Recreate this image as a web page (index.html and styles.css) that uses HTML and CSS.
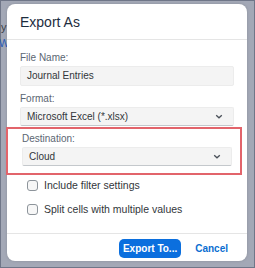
FILE: index.html
```html
<!DOCTYPE html>
<html lang="en">
  <head>
    <meta charset="UTF-8" />
    <meta name="viewport" content="width=device-width, initial-scale=1.0" />
    <title>Export As</title>
    <link rel="stylesheet" href="styles.css">
  </head>
  <body>
    <div class="backdrop">
      <div class="bg-line">y</div>
      <div class="bg-line bg-link">W</div>
    </div>

    <div class="dialog">
      <div class="dialog-header">Export As</div>
      <div class="dialog-content">
        <div class="field">
          <label class="field-label">File Name:</label>
          <div class="input">Journal Entries</div>
        </div>
        <div class="field">
          <label class="field-label">Format:</label>
          <div class="input select">
            <span>Microsoft Excel (*.xlsx)</span>
            <svg class="chevron" width="8" height="5" viewBox="0 0 8 5">
              <path d="M1.2 1.2l2.8 2.6 2.8-2.6" fill="none" stroke="#4a5059" stroke-width="1.3" />
            </svg>
          </div>
        </div>
        <div class="field highlight">
          <label class="field-label">Destination:</label>
          <div class="input select">
            <span>Cloud</span>
            <svg class="chevron" width="8" height="5" viewBox="0 0 8 5">
              <path d="M1.2 1.2l2.8 2.6 2.8-2.6" fill="none" stroke="#4a5059" stroke-width="1.3" />
            </svg>
          </div>
        </div>
        <div class="checks">
          <label class="check-row"><span class="checkbox"></span>Include filter settings</label>
          <label class="check-row"><span class="checkbox"></span>Split cells with multiple values</label>
        </div>
      </div>
      <div class="dialog-footer">
        <button class="btn btn-primary">Export To...</button>
        <button class="btn btn-ghost">Cancel</button>
      </div>
    </div>
  </body>
</html>
```

FILE: styles.css
```css
/* General reset */
* {
  margin: 0;
  padding: 0;
  box-sizing: border-box;
  font-family: "Liberation Sans", Arial, sans-serif;
}

body {
  position: relative;
  width: 255px;
  height: 268px;
  overflow: hidden;
  background: #a3a8b6;
  box-shadow: inset 0 0 0 1px #6f7688;
}

/* Page behind the dialog */
.backdrop {
  padding-top: 19px;
  font-size: 11px;
  line-height: 16px;
  color: #3a3f48;
}

.bg-line {
  padding-left: 1px;
}

.bg-link {
  margin-left: -2px;
  color: #2a5db8;
}

/* Dialog */
.dialog {
  position: absolute;
  left: 7px;
  top: 4px;
  width: 240px;
  height: 257px;
  background: #ffffff;
  border-radius: 8px;
  display: flex;
  flex-direction: column;
  box-shadow: 0 0 3px rgba(0, 0, 0, 0.15);
}

.dialog-header {
  height: 36px;
  padding: 0 13px;
  display: flex;
  align-items: center;
  border-bottom: 1px solid #e5e5e5;
  font-size: 14px;
  color: #1d2d3e;
}

.dialog-content {
  padding: 12px 13px 0;
}

/* Fields */
.field + .field {
  margin-top: 7px;
}

.field-label {
  display: block;
  font-size: 10px;
  line-height: 12px;
  color: #5b6672;
  margin-bottom: 2px;
}

.input {
  height: 20px;
  padding: 0 6px;
  background: #f4f4f4;
  border: 1px solid #ececec;
  border-radius: 2px;
  font-size: 10px;
  line-height: 18px;
  color: #32363a;
}

.select {
  height: 19px;
  display: flex;
  align-items: center;
  justify-content: space-between;
  border-bottom-color: #c4c8cc;
}

.chevron {
  margin-right: 4px;
}

.highlight {
  margin-left: -14px;
  margin-right: -8px;
  padding: 4px 8px 7px 14px;
  border: 2px solid #e2646b;
}

.field + .highlight {
  margin-top: 1px;
}

/* Checkboxes */
.checks {
  display: flex;
  flex-direction: column;
  gap: 6px;
  margin-top: 1px;
}

.check-row {
  height: 18px;
  display: flex;
  align-items: center;
  gap: 6px;
  padding-left: 7px;
  font-size: 10.5px;
  color: #32363a;
}

.checkbox {
  width: 11px;
  height: 11px;
  border: 1px solid #8d949b;
  border-radius: 3px;
  background: #f7f7f7;
}

/* Footer */
.dialog-footer {
  margin-top: auto;
  border-top: 1px solid #e5e5e5;
  padding: 5px 14px 3px;
  display: flex;
  justify-content: flex-end;
  gap: 9px;
}

.btn {
  height: 19px;
  padding: 0 5px;
  border: none;
  border-radius: 5px;
  font-size: 10px;
  font-weight: bold;
  white-space: nowrap;
  cursor: pointer;
}

.btn-primary {
  padding: 0 4px;
  background: #0b6fde;
  color: #fff;
}

.btn-ghost {
  background: transparent;
  color: #0a6ed1;
}
```
